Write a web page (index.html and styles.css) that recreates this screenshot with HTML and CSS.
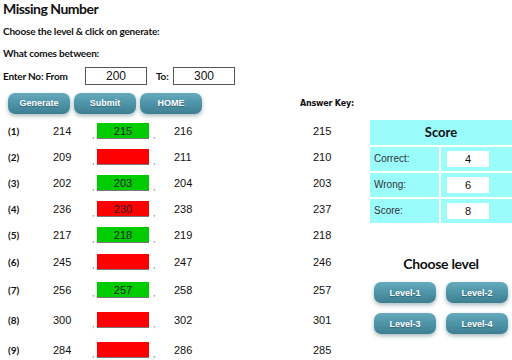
FILE: index.html
```html
<!DOCTYPE html>
<html lang="en">
<head>
    <meta charset="UTF-8">
    <title>Missing Number</title>
    <link rel="stylesheet" href="styles.css">
</head>
<body>
    <div class="page">
        <div class="left">
            <h1 class="title">Missing Number</h1>
            <p class="hint">Choose the level &amp; click on generate:</p>
            <p class="hint second">What comes between:</p>

            <div class="range">
                <span class="range-label">Enter No: From</span>
                <div class="num-box">200</div>
                <span class="to-label">To:</span>
                <div class="num-box">300</div>
            </div>

            <div class="actions">
                <button class="btn">Generate</button>
                <button class="btn">Submit</button>
                <button class="btn">HOME</button>
                <span class="key-label">Answer Key:</span>
            </div>

            <div class="rows">
                <span class="idx">(1)</span><span class="n">214</span><span class="c">,</span><span class="ans ok">215</span><span class="c">,</span><span class="n">216</span><span class="key">215</span>
                <span class="idx">(2)</span><span class="n">209</span><span class="c">,</span><span class="ans bad"></span><span class="c">,</span><span class="n">211</span><span class="key">210</span>
                <span class="idx">(3)</span><span class="n">202</span><span class="c">,</span><span class="ans ok">203</span><span class="c">,</span><span class="n">204</span><span class="key">203</span>
                <span class="idx">(4)</span><span class="n">236</span><span class="c">,</span><span class="ans bad">230</span><span class="c">,</span><span class="n">238</span><span class="key">237</span>
                <span class="idx">(5)</span><span class="n">217</span><span class="c">,</span><span class="ans ok">218</span><span class="c">,</span><span class="n">219</span><span class="key">218</span>
                <span class="idx">(6)</span><span class="n">245</span><span class="c">,</span><span class="ans bad"></span><span class="c">,</span><span class="n">247</span><span class="key">246</span>
                <span class="idx">(7)</span><span class="n">256</span><span class="c">,</span><span class="ans ok">257</span><span class="c">,</span><span class="n">258</span><span class="key">257</span>
                <span class="idx">(8)</span><span class="n">300</span><span class="c">,</span><span class="ans bad"></span><span class="c">,</span><span class="n">302</span><span class="key">301</span>
                <span class="idx">(9)</span><span class="n">284</span><span class="c">,</span><span class="ans bad"></span><span class="c">,</span><span class="n">286</span><span class="key">285</span>
            </div>
        </div>

        <div class="right">
            <div class="score">
                <div class="score-head">Score</div>
                <div class="score-row"><span class="score-name">Correct:</span><span class="score-cell"><span class="score-val">4</span></span></div>
                <div class="score-row"><span class="score-name">Wrong:</span><span class="score-cell"><span class="score-val">6</span></span></div>
                <div class="score-row"><span class="score-name">Score:</span><span class="score-cell"><span class="score-val">8</span></span></div>
            </div>

            <h2 class="level-title">Choose level</h2>
            <div class="levels">
                <button class="btn">Level-1</button>
                <button class="btn">Level-2</button>
                <button class="btn">Level-3</button>
                <button class="btn">Level-4</button>
            </div>
        </div>
    </div>
</body>
</html>
```

FILE: styles.css
```css
* { margin: 0; padding: 0; box-sizing: border-box; }

body {
    background: #fff;
    color: #111;
    font-family: "Liberation Sans", Arial, sans-serif;
}

.page {
    display: flex;
    width: 512px;
    height: 360px;
    overflow: hidden;
}

.left {
    width: 370px;
    flex-shrink: 0;
}

.title {
    font-family: Lato, "Open Sans", sans-serif;
    font-weight: 700;
    font-size: 14px;
    line-height: 18px;
    padding-left: 3px;
    letter-spacing: -0.5px;
}

.hint {
    font-family: Lato, "Open Sans", sans-serif;
    font-weight: 700;
    font-size: 10px;
    line-height: 14px;
    padding-left: 3px;
    margin-top: 6px;
    letter-spacing: -0.2px;
}

.hint.second {
    margin-top: 8px;
}

.range {
    display: flex;
    align-items: center;
    height: 18px;
    margin-top: 7px;
    padding-left: 3px;
    font-family: Lato, "Open Sans", sans-serif;
    font-weight: 700;
    font-size: 10px;
    letter-spacing: -0.2px;
}

.range-label {
    width: 82px;
}

.to-label {
    width: 26px;
    padding-left: 9px;
}

.num-box {
    width: 62px;
    height: 18px;
    border: 1px solid #555;
    text-align: center;
    font-family: "Liberation Sans", Arial, sans-serif;
    font-weight: 400;
    font-size: 12px;
    line-height: 16px;
    letter-spacing: 0;
}

.actions {
    display: flex;
    align-items: center;
    gap: 4px;
    padding-left: 8px;
    margin-top: 7px;
    height: 22px;
}

.btn {
    width: 62px;
    height: 21px;
    border: none;
    border-radius: 7px;
    background: linear-gradient(#66aabd 0%, #5096aa 45%, #3e7e92 100%);
    box-shadow: 0 2px 4px rgba(40, 80, 95, 0.4);
    color: #fff;
    font-family: "Liberation Sans", Arial, sans-serif;
    font-weight: 700;
    font-size: 9px;
    text-shadow: 0 1px 1px rgba(0, 0, 0, 0.3);
}

.key-label {
    margin-left: 94px;
    font-family: "DejaVu Sans", sans-serif;
    font-weight: 700;
    font-size: 8px;
    letter-spacing: -0.2px;
}

.rows {
    display: grid;
    grid-template-columns: 45px 39px 5px 52px 25px 139px 40px;
    grid-template-rows: 26px 26px 26px 26px 26px 27px 29px 32px 28px;
    align-items: center;
    padding-left: 8px;
    margin-top: 4px;
    font-size: 11px;
}

.idx {
    font-family: Lato, "Open Sans", sans-serif;
    font-weight: 700;
    font-size: 10px;
}

.c {
    font-size: 9px;
    color: #777;
    padding-top: 7px;
}

.ans {
    height: 16px;
    line-height: 16px;
    text-align: center;
    color: #222;
    border-bottom: 1px solid #777;
}

.ans.ok { background: #00cc00; }
.ans.bad { background: #ff0000; }

.ans + .c {
    padding-left: 4px;
}

.right {
    width: 142px;
    flex-shrink: 0;
    padding-top: 120px;
}

.score {
    background: #fff;
    display: flex;
    flex-direction: column;
    gap: 2px;
}

.score-head {
    background: #9bfcfc;
    height: 25px;
    text-align: center;
    font-family: Lato, "Open Sans", sans-serif;
    font-weight: 700;
    font-size: 13px;
    line-height: 25px;
}

.score-row {
    display: grid;
    grid-template-columns: 69px 71px;
    gap: 2px;
    height: 24px;
}

.score-name {
    background: #9bfcfc;
    font-size: 10px;
    line-height: 24px;
    padding-left: 4px;
    color: #333;
}

.score-cell {
    background: #9bfcfc;
    display: flex;
    align-items: center;
    padding-left: 6px;
}

.score-val {
    background: #fff;
    width: 42px;
    height: 16px;
    text-align: center;
    font-size: 11px;
    line-height: 16px;
}

.level-title {
    font-family: Lato, "Open Sans", sans-serif;
    font-weight: 700;
    font-size: 14px;
    line-height: 18px;
    text-align: center;
    margin-top: 32px;
    letter-spacing: -0.3px;
}

.levels {
    display: grid;
    grid-template-columns: 62px 62px;
    gap: 10px;
    padding-left: 4px;
    margin-top: 9px;
}
```
